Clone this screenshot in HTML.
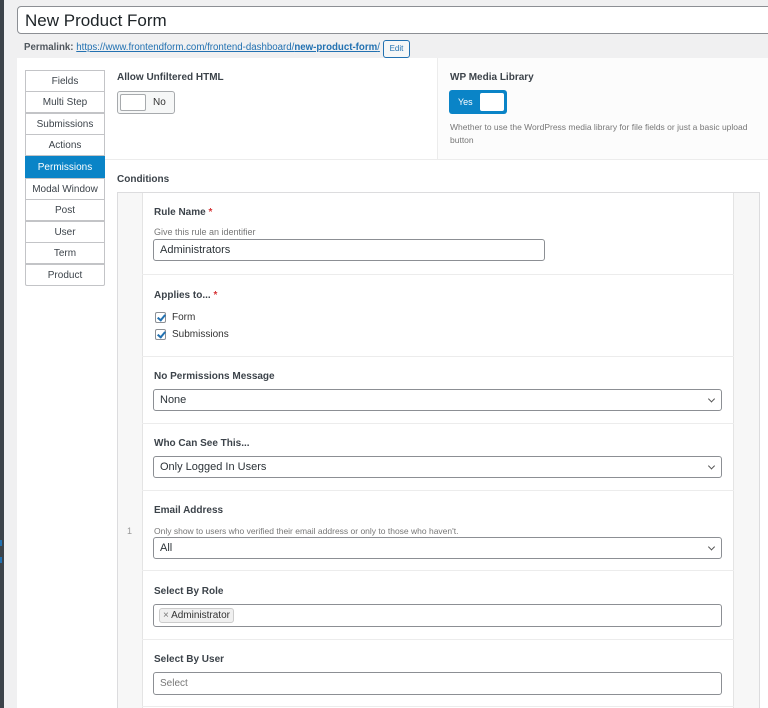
<!DOCTYPE html>
<html><head><meta charset="utf-8"><style>
*{box-sizing:border-box;margin:0;padding:0}
html,body{width:768px;height:708px;overflow:hidden}
body{background:#f0f0f1;font-family:"Liberation Sans",sans-serif;color:#1d2327;position:relative}
.a{position:absolute}
.lbl{font-size:10px;font-weight:bold;color:#3c434a}
.hint{font-size:9px;color:#777}
.inp{position:absolute;border:1px solid #8c8f94;border-radius:3px;background:#fff;font-size:11px;color:#2c3338;padding-left:6px;display:flex;align-items:center}
.chev{position:absolute;right:7px;top:50%;width:5px;height:5px;border-right:1.5px solid #555;border-bottom:1.5px solid #555;transform:translateY(-70%) rotate(45deg)}
.tab{position:absolute;left:25px;width:80px;height:22px;border:1px solid #c3c4c7;background:#fff;font-size:10px;text-align:center;line-height:21px;color:#3c434a}
.sep{position:absolute;left:142px;width:592px;height:1px;background:#ececec}
.cb{position:absolute;width:11px;height:11px;border:1px solid #8c8f94;border-radius:2px;background:#fff}
.cb:after{content:"";position:absolute;left:3px;top:0px;width:3px;height:6px;border-right:2px solid #2271b1;border-bottom:2px solid #2271b1;transform:rotate(40deg)}
</style></head><body>
<div class="a" style="left:0;top:0;width:4px;height:708px;background:#3c434a"></div>
<div class="a" style="left:0;top:540px;width:2px;height:6px;background:#2271b1"></div>
<div class="a" style="left:0;top:557px;width:2px;height:6px;background:#2271b1"></div>
<div class="a" style="left:17px;top:6px;width:760px;height:28px;background:#fff;border:1px solid #8c8f94;border-radius:4px;font-size:17px;padding:4px 0 0 7px;color:#1d2327">New Product Form</div>
<div class="a" style="left:24px;top:42px;font-size:9.7px;color:#50575e;white-space:nowrap"><b>Permalink:</b> <span style="color:#2271b1;text-decoration:underline">https://www.frontendform.com/frontend-dashboard/<b>new-product-form</b>/</span></div>
<div class="a" style="left:383px;top:40px;width:27px;height:18px;border:1px solid #2271b1;border-radius:3px;background:#f6f7f7;font-size:8px;color:#2271b1;text-align:center;line-height:16px">Edit</div>
<div class="a" style="left:17px;top:58px;width:751px;height:650px;background:#fff"></div>
<div class="tab" style="top:70px">Fields</div>
<div class="tab" style="top:91px">Multi Step</div>
<div class="tab" style="top:113px">Submissions</div>
<div class="tab" style="top:134px">Actions</div>
<div class="tab" style="top:156px;background:#0a84c7;border-color:#0a84c7;color:#fff">Permissions</div>
<div class="tab" style="top:178px">Modal Window</div>
<div class="tab" style="top:199px">Post</div>
<div class="tab" style="top:221px">User</div>
<div class="tab" style="top:242px">Term</div>
<div class="tab" style="top:264px;height:22px;border-radius:0 0 2px 2px">Product</div>
<div class="a lbl" style="left:117px;top:72px">Allow Unfiltered HTML</div>
<div class="a" style="left:117px;top:91px;width:58px;height:23px;border:1px solid #a7aaad;border-radius:3px;background:#f6f7f7"></div>
<div class="a" style="left:120px;top:94px;width:26px;height:17px;border:1px solid #a7aaad;border-radius:2px;background:#fff"></div>
<div class="a" style="left:153px;top:97px;font-size:10px;color:#333">No</div>
<div class="a" style="left:437px;top:58px;width:1px;height:101px;background:#ececec"></div>
<div class="a" style="left:438px;top:58px;width:330px;height:101px;background:#fcfcfc"></div>
<div class="a lbl" style="left:450px;top:72px">WP Media Library</div>
<div class="a" style="left:449px;top:90px;width:58px;height:24px;background:#0a84c7;border-radius:3px"></div>
<div class="a" style="left:480px;top:93px;width:24px;height:18px;background:#fff;border-radius:2px"></div>
<div class="a" style="left:458px;top:97px;font-size:9px;color:#fff">Yes</div>
<div class="a hint" style="left:450px;top:121px;line-height:13px;width:318px;font-size:8.5px">Whether to use the WordPress media library for file fields or just a basic upload button</div>
<div class="a" style="left:105px;top:159px;width:663px;height:1px;background:#ececec"></div>
<div class="a lbl" style="left:117px;top:174px">Conditions</div>
<div class="a" style="left:117px;top:192px;width:643px;height:520px;border:1px solid #dcdcde;background:#f7f7f7"></div>
<div class="a" style="left:142px;top:193px;width:592px;height:520px;background:#fff;border-left:1px solid #e4e4e4;border-right:1px solid #e4e4e4"></div>
<div class="a" style="left:127px;top:526px;font-size:9px;color:#999">1</div>

<div class="a lbl" style="left:154px;top:207px">Rule Name <span style="color:#d63638">*</span></div>
<div class="a hint" style="left:154px;top:227px">Give this rule an identifier</div>
<div class="inp" style="left:153px;top:239px;width:392px;height:22px">Administrators</div>
<div class="sep" style="top:274px"></div>
<div class="a lbl" style="left:154px;top:290px">Applies to... <span style="color:#d63638">*</span></div>
<div class="cb" style="left:155px;top:312px"></div><div class="a" style="left:172px;top:312px;font-size:10px;color:#333">Form</div>
<div class="cb" style="left:155px;top:329px"></div><div class="a" style="left:172px;top:329px;font-size:10px;color:#333">Submissions</div>
<div class="sep" style="top:356px"></div>
<div class="a lbl" style="left:154px;top:371px">No Permissions Message</div>
<div class="inp" style="left:153px;top:389px;width:569px;height:22px">None<span class="chev"></span></div>
<div class="sep" style="top:423px"></div>
<div class="a lbl" style="left:154px;top:438px">Who Can See This...</div>
<div class="inp" style="left:153px;top:456px;width:569px;height:22px">Only Logged In Users<span class="chev"></span></div>
<div class="sep" style="top:490px"></div>
<div class="a lbl" style="left:154px;top:505px">Email Address</div>
<div class="a hint" style="left:154px;top:526px;font-size:8.5px">Only show to users who verified their email address or only to those who haven't.</div>
<div class="inp" style="left:153px;top:537px;width:569px;height:22px">All<span class="chev"></span></div>
<div class="sep" style="top:570px"></div>
<div class="a lbl" style="left:154px;top:586px">Select By Role</div>
<div class="inp" style="left:153px;top:604px;width:569px;height:23px;padding-left:5px"><span style="border:1px solid #ccc;background:#f0f0f0;border-radius:3px;padding:1px 3px;font-size:10px;color:#333"><span style="color:#777">×</span> Administrator</span></div>
<div class="sep" style="top:639px"></div>
<div class="a lbl" style="left:154px;top:654px">Select By User</div>
<div class="inp" style="left:153px;top:672px;width:569px;height:23px;color:#777;font-size:10px">Select</div>
<div class="sep" style="top:706px"></div>
</body></html>
